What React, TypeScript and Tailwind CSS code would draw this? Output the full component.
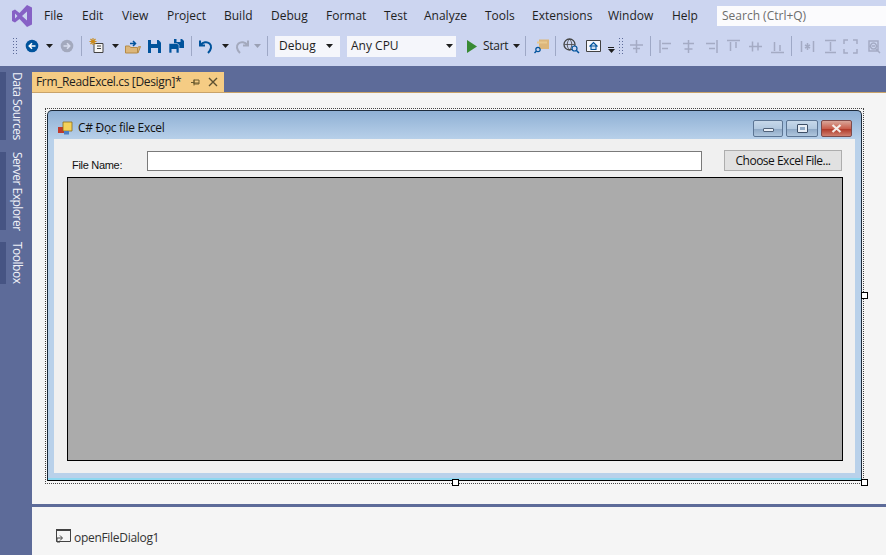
import React from 'react';

const menus: [string, number][] = [
  ['File', 38], ['Edit', 40], ['View', 45], ['Project', 57], ['Build', 47], ['Debug', 55],
  ['Format', 58], ['Test', 40], ['Analyze', 61], ['Tools', 47], ['Extensions', 76], ['Window', 64], ['Help', 45],
];

const Caret = ({ dark = true, className = '' }: { dark?: boolean; className?: string }) => (
  <svg width="7" height="4" viewBox="0 0 7 4" className={className}>
    <path d="M0 0h7L3.500 4z" fill={dark ? '#1e1e1e' : '#9aa0b4'} />
  </svg>
);

const Sep = ({ className = '' }: { className?: string }) => <div className={`w-px h-5 bg-[#9ea8c6] ${className}`} />;

const Gripper = ({ className = '' }: { className?: string }) => (
  <div className={`w-[6px] h-[18px] bg-[radial-gradient(#5d6b99_0.7px,transparent_1px)] bg-[length:3px_3px] ${className}`} />
);

const Gray = ({ d, className = '' }: { d: string; className?: string }) => (
  <svg width="15" height="15" viewBox="0 0 15 15" className={className}>
    <path d={d} fill="none" stroke="#a4abc4" strokeWidth="1.500" />
  </svg>
);

const Toolbar = () => (
  <div className="flex items-center h-[28px] pl-3">
    <Gripper />
    <svg width="14" height="14" viewBox="0 0 14 14" className="ml-[7px]">
      <circle cx="7" cy="7" r="6.300" fill="#00539c" />
      <path d="M10.500 7H5M7 4.300 4.300 7 7 9.700" fill="none" stroke="#fff" strokeWidth="1.600" />
    </svg>
    <Caret className="ml-[7px]" />
    <svg width="14" height="14" viewBox="0 0 14 14" className="ml-[7px]">
      <circle cx="7" cy="7" r="6.300" fill="#a3a9bd" />
      <path d="M3.500 7H9M7 4.300 9.700 7 7 9.700" fill="none" stroke="#d8ddee" strokeWidth="1.600" />
    </svg>
    <Sep className="ml-[7px]" />
    <svg width="16" height="16" viewBox="0 0 16 16" className="ml-[7px]">
      <path d="M5 5.500h9v9H5z" fill="#f6f6f6" stroke="#424242" />
      <path d="M8 8h4M8 10.500h4" stroke="#424242" />
      <path d="M4 0v7M.500 3.500h7M1.500 1l5 5M6.500 1l-5 5" stroke="#c98a1a" strokeWidth="1.100" />
    </svg>
    <Caret className="ml-[7px]" />
    <svg width="16" height="15" viewBox="0 0 16 15" className="ml-[6px]">
      <path d="M.500 14V7h4l1 1.500h7V14z" fill="#dcb67a" stroke="#b58b46" />
      <path d="M13 8l2.500-.5L13 14" fill="#dcb67a" stroke="#b58b46" />
      <path d="M5 4.500h5M8 2l2.500 2.500L8 7" fill="none" stroke="#00539c" strokeWidth="1.500" />
    </svg>
    <svg width="13" height="13" viewBox="0 0 13 13" className="ml-[7px]">
      <path d="M0 0h10.500L13 2.500V13H0z" fill="#00539c" />
      <path d="M3 0h6v4H3zM3 8h7v5H3z" fill="#ccd5f0" />
    </svg>
    <svg width="15" height="14" viewBox="0 0 15 14" className="ml-[8px]">
      <path d="M5 0h8l2 2v7H5z" fill="#00539c" />
      <path d="M7.500 0h4v3h-4z" fill="#ccd5f0" />
      <path d="M0 4.500h8L10 6v8H0z" fill="#00539c" stroke="#ccd5f0" strokeWidth=".6" />
      <path d="M2.500 10h5v4h-5z" fill="#ccd5f0" />
    </svg>
    <Sep className="ml-[7px]" />
    <svg width="14" height="15" viewBox="0 0 14 15" className="ml-[7px]">
      <path d="M1 1.500v5h5M1.500 6C4 3 8 2.300 10.500 4.500c2.500 2.200 2 6-1.500 9.500" fill="none" stroke="#00539c" strokeWidth="2" />
    </svg>
    <Caret className="ml-[9px]" />
    <svg width="14" height="15" viewBox="0 0 14 15" className="ml-[6px]">
      <path d="M13 1.500v5H8M12.500 6C10 3 6 2.300 3.500 4.500c-2.500 2.200-2 6 1.500 9.500" fill="none" stroke="#a3a9bd" strokeWidth="2" />
    </svg>
    <Caret dark={false} className="ml-[5px]" />
    <Sep className="ml-[6px]" />
    <div className="ml-[7px] flex items-center justify-between w-[65px] h-[21px] bg-[#f5f6fb] pl-1 pr-[7px]">
      <span>Debug</span>
      <Caret />
    </div>
    <div className="ml-[7px] flex items-center justify-between w-[109px] h-[21px] bg-[#f5f6fb] pl-1 pr-[3px]">
      <span>Any CPU</span>
      <Caret />
    </div>
    <svg width="10" height="13" viewBox="0 0 10 13" className="ml-[11px]">
      <path d="M0 0l10 6.500L0 13z" fill="#388a34" />
    </svg>
    <span className="ml-[6px] w-[27px] tracking-[-0.3px]">Start</span>
    <Caret className="ml-[3px]" />
    <Sep className="ml-[5px]" />
    <svg width="16" height="16" viewBox="0 0 16 16" className="ml-[8px]">
      <path d="M5 1.500h10V11H5z" fill="#dcb67a" />
      <path d="M3 3.500h10v2H3z" fill="#e8c98f" />
      <circle cx="4" cy="11.500" r="2.200" fill="none" stroke="#00539c" strokeWidth="1.200" />
      <path d="M2.500 13 .500 15" stroke="#00539c" strokeWidth="1.400" />
    </svg>
    <Sep className="ml-[5px]" />
    <svg width="17" height="16" viewBox="0 0 17 16" className="ml-[7px]">
      <circle cx="6.500" cy="6.500" r="5.500" fill="none" stroke="#424242" strokeWidth="1.300" />
      <path d="M1.500 6.500h10M6.500 1c-3 3-3 8 0 11M6.500 1c3 3 3 8 0 11" fill="none" stroke="#424242" strokeWidth=".8" />
      <circle cx="11.500" cy="10.500" r="2.500" fill="#ccd5f0" stroke="#00539c" strokeWidth="1.200" />
      <path d="M13.500 12.500l2.500 2.500" stroke="#00539c" strokeWidth="1.500" />
    </svg>
    <svg width="15" height="14" viewBox="0 0 15 14" className="ml-[6px]">
      <path d="M.500 1.500h14v11H.500z" fill="#f5f6fb" stroke="#424242" />
      <path d="M3.500 7.500l4-4 4 4M5 7v3.500h5V7z" fill="#cfe0f3" stroke="#00539c" strokeWidth="1.100" />
    </svg>
    <div className="ml-[7px] mt-2 flex flex-col gap-px">
      <div className="w-[6px] h-px bg-[#1e1e1e]" />
      <Caret />
    </div>
    <Gripper className="ml-[3px]" />
    <Gray className="ml-[5px]" d="M7.500 1v13M1 6h13M4 9.500h7" />
    <Sep className="ml-[6px]" />
    <Gray className="ml-[8px]" d="M1 1v13M3 4.500h9M3 9.500h6" />
    <Gray className="ml-[7px]" d="M7.500 1v13M2 4.500h11M3.500 10h8" />
    <Gray className="ml-[7px]" d="M14 1v13M3 4.500h9M6 9.500h6" />
    <Gray className="ml-[8px]" d="M1 1.500h13M4.500 3v9M10 3v6" />
    <Gray className="ml-[7px]" d="M1 7.500h13M4.500 2.500v10M10 3.500v8" />
    <Gray className="ml-[7px]" d="M1 13.500h13M4.500 3v9M10 6v6" />
    <Sep className="ml-[6px]" />
    <Gray className="ml-[8px]" d="M1.500 2v11M13.500 2v11M7.500 4v7M5 6l5 3M10 6l-5 3" />
    <Gray className="ml-[8px]" d="M2 1.500h11M2 13.500h11M7.500 3v9" />
    <Gray className="ml-[5px]" d="M1 5V1h4M10 1h4v4M1 10v4h4M14 10v4h-4" />
    <Gray className="ml-[9px]" d="M2 2h9v10H2zM6.500 4a3 3 0 1 0 .01 0M9 10l4 4M5 7h3" />
  </div>
);

const WinBtn = ({ w, children, red }: { w: string; children: React.ReactNode; red?: boolean }) => (
  <div
    className={`${w} h-[17px] rounded-[2px] border flex items-center justify-center ${
      red
        ? 'border-[#7d4a4a] bg-[linear-gradient(#d9a69a,#c9604e_50%,#b03a2a_55%,#cf7f6f)]'
        : 'border-[#5c7594] bg-[linear-gradient(#c6d8ea,#b3c9e0_50%,#8fa9c6_55%,#afc6dd)]'
    }`}
  >
    {children}
  </div>
);

const Handle = ({ className }: { className: string }) => (
  <div className={`absolute w-[7px] h-[7px] bg-white border border-black ${className}`} />
);

const DesignForm = () => (
  <div className="relative ml-[15px] mt-[17px] w-[815px] h-[371px]">
    <div className="absolute -inset-x-[2px] -top-[2px] -bottom-[3px] border border-dotted border-[#444]" />
    <Handle className="-right-[6px] top-[182px]" />
    <Handle className="left-[405px] -bottom-[5px]" />
    <Handle className="-right-[6px] -bottom-[5px]" />
    <div className="h-full flex flex-col border border-[#1c2a3a] border-b-black rounded-t-[5px] bg-[linear-gradient(#8fb0d4,#b9d1ea_29px)] shadow-[inset_0_-2px_0_#8fd8f0]">
      <div className="h-[28px] shrink-0 flex items-center pt-[6px] pl-[10px] pr-[9px]">
        <svg width="15" height="14" viewBox="0 0 15 14">
          <path d="M0 6h6v6H0z" fill="#c0392b" />
          <path d="M5 1h9v9H5z" fill="#f4d25a" stroke="#8a6d1c" strokeWidth=".8" />
          <path d="M6 10h5v3.500H6z" fill="#4a7fc4" />
        </svg>
        <span className="ml-[5px] text-[#111] tracking-[-0.3px]">C# Đọc file Excel</span>
        <div className="ml-auto flex gap-[3px]">
          <WinBtn w="w-[30px]">
            <div className="w-[11px] h-[4px] mt-1 bg-[#e8eef6] border border-[#50627a] rounded-[1px]" />
          </WinBtn>
          <WinBtn w="w-[32px]">
            <div className="w-[11px] h-[9px] bg-[#e8eef6] border border-[#3c4e66] rounded-[1px] flex items-center justify-center">
              <div className="w-[5px] h-[3px] bg-[#8fa9c6]" />
            </div>
          </WinBtn>
          <WinBtn w="w-[31px]" red>
            <svg width="11" height="9" viewBox="0 0 11 9">
              <path d="M1.500 1l8 7M9.500 1l-8 7" stroke="#f4ece8" strokeWidth="2.200" />
            </svg>
          </WinBtn>
        </div>
      </div>
      <div className="mx-[6px] h-[334px] bg-[#f0f0f0] pl-[13px] pr-[13px]">
        <div className="h-[38px] flex items-start">
          <span className="w-[80px] mt-[18px] pl-[5px] text-[11px] leading-[16px] text-[#111] font-['Liberation_Sans',sans-serif] tracking-[-0.3px]">
            File Name:
          </span>
          <div className="mt-[12px] w-[555px] h-[20px] bg-white border border-[#7a7a7a]" />
          <div className="ml-[22px] mt-[11px] w-[118px] h-[21px] bg-[#e1e1e1] border border-[#adadad] flex items-center justify-center text-[#111] tracking-[-0.5px]">
            Choose Excel File...
          </div>
        </div>
        <div className="w-[776px] h-[284px] bg-[#ababab] border border-black" />
      </div>
    </div>
  </div>
);

export default function App() {
  return (
    <div className="w-[886px] h-[555px] overflow-hidden flex flex-col bg-[#5d6b99] text-[12px] leading-[16px] text-[#1e1e1e] font-['Open_Sans',sans-serif]">
      <div className="h-[66px] shrink-0 bg-[#ccd5f0]">
        <div className="h-[32px] flex items-center">
          <svg width="20" height="22" viewBox="0 0 20 22" className="ml-[12px] mr-[12px] shrink-0">
            <path
              fillRule="evenodd"
              d="M15 0 20 2.500V19.500L15 22 7.500 14 3 17.500 0 16V6L3 4.500 7.500 8ZM15 6.500 10 11 15 15.500ZM3 8.500V13.500L5.500 11Z"
              fill="#8661c5"
            />
          </svg>
          <div className="flex">
            {menus.map(([label, width]) => (
              <span key={label} className="shrink-0" style={{ width }}>{label}</span>
            ))}
          </div>
          <div className="flex-1 h-[20px] bg-[#fbfbfd] pl-[5px] flex items-center text-[#6d6d6d]">
            Search (Ctrl+Q)
          </div>
        </div>
        <Toolbar />
      </div>
      <div className="flex-1 flex min-h-0">
        <div className="w-[32px] shrink-0 pt-[6px] flex flex-col gap-[12px] text-white">
          {[
            ['Data Sources', 'h-[68px]'],
            ['Server Explorer', 'h-[78px]'],
            ['Toolbox', 'h-[42px]'],
          ].map(([label, h]) => (
            <div key={label} className={`flex ${h}`}>
              <div className="w-[6px] bg-[#465483]" />
              <span className="ml-[3px] w-[16px] [writing-mode:vertical-rl] text-center text-[#f0f2f8] whitespace-nowrap tracking-[-0.5px]">{label}</span>
            </div>
          ))}
        </div>
        <div className="flex-1 flex flex-col min-w-0">
          <div className="h-[26px] shrink-0 flex items-end">
            <div className="h-[20px] w-[192px] bg-[#f5cc84] flex items-center pl-1">
              <span className="whitespace-nowrap text-[#1e1e1e] tracking-[-0.35px]">Frm_ReadExcel.cs [Design]*</span>
              <svg width="9" height="9" viewBox="0 0 9 9" className="ml-auto">
                <path d="M0 4.500h3M3 1.500v6M3 2h5v4H3zM3 5h5" fill="none" stroke="#6b5a2f" />
              </svg>
              <svg width="10" height="10" viewBox="0 0 10 10" className="ml-[8px] mr-[6px]">
                <path d="M1 1l8 8M9 1l-8 8" stroke="#5c5030" strokeWidth="1.400" />
              </svg>
            </div>
          </div>
          <div className="flex-1 bg-[#f5f5f5] border-t border-[#c9a36a] flex flex-col min-h-0">
            <div className="h-[411px] shrink-0">
              <DesignForm />
            </div>
            <div className="h-[3px] shrink-0 bg-[#5d6b99]" />
            <div className="flex-1 flex items-center pl-[24px] pt-[10px]">
              <svg width="15" height="14" viewBox="0 0 15 14">
                <path d="M.500.500h14v12H.500z" fill="none" stroke="#424242" />
                <path d="M0 0h15v2H0z" fill="#424242" />
                <path d="M1 9h5M4 6.500 6.500 9 4 11.500M1 9v4h3" fill="none" stroke="#424242" />
              </svg>
              <span className="ml-[3px] mt-[4px] text-[#333] tracking-[-0.3px]">openFileDialog1</span>
            </div>
          </div>
        </div>
      </div>
    </div>
  );
}
